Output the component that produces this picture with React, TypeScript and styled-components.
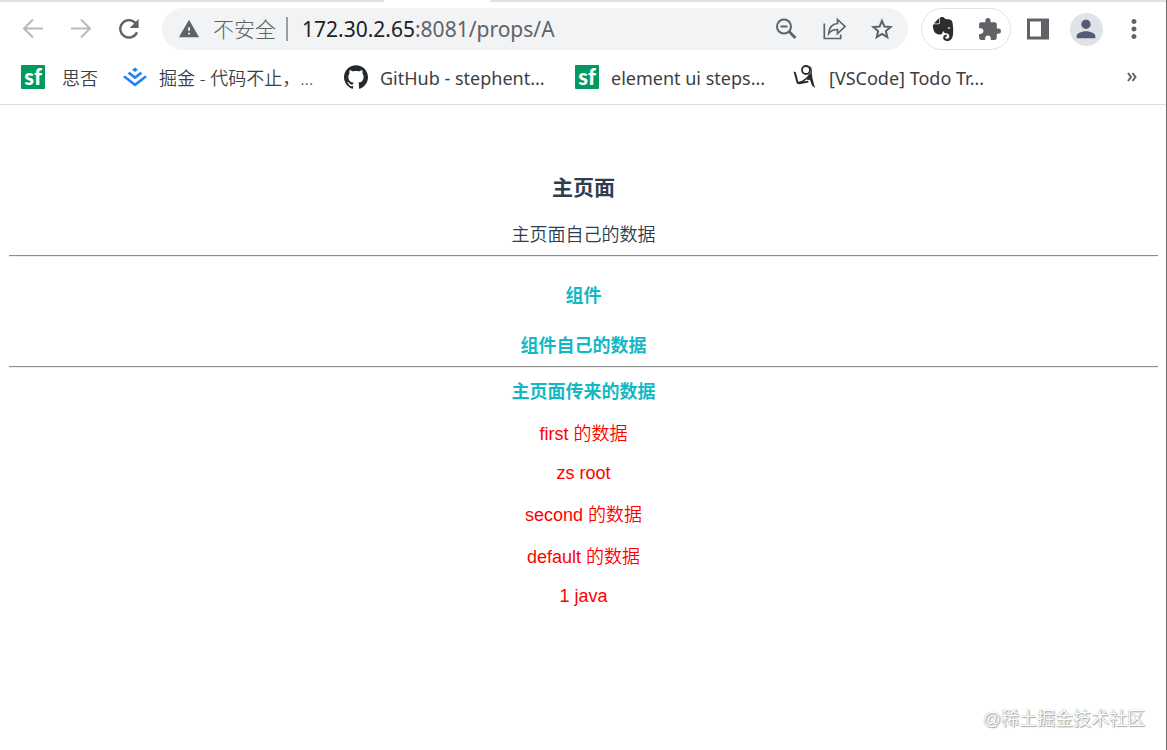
import React from 'react';
import styled, { createGlobalStyle } from 'styled-components';
import { MdExtension, MdMoreVert, MdPerson, MdWarning } from 'react-icons/md';
import { SiEvernote, SiJuejin, SiGithub } from 'react-icons/si';

const Global = createGlobalStyle`
  *, *::before, *::after { box-sizing: border-box; }
  body { margin: 0; background: #fff; }
`;

const uiFont = `'Noto Sans', 'Noto Sans CJK SC', sans-serif`;
const pageFont = `'Liberation Sans', 'Noto Sans CJK SC', sans-serif`;

const Window = styled.div`
  min-height: 100vh;
  display: flex;
  flex-direction: column;
  border-right: 1px solid #6b6b6b;
`;

const Chrome = styled.header`
  font-family: ${uiFont};
  border-bottom: 1px solid #dadce0;
`;

const TabEdge = styled.div`
  display: flex;
  height: 2px;
  justify-content: space-between;
`;

const TabEdgePart = styled.div<{ $grow: number }>`
  flex: ${p => p.$grow} 1 0;
  background: #dee1e3;
  &:first-child { margin-right: 106px; }
`;

const Toolbar = styled.nav`
  display: flex;
  align-items: center;
  padding: 6px 8px 0 9px;
`;

const IconButton = styled.button<{ $width?: number; $faded?: boolean }>`
  display: flex;
  flex: none;
  align-items: center;
  justify-content: center;
  width: ${p => p.$width ?? 48}px;
  height: 42px;
  padding: 0;
  border: 0;
  background: none;
  color: ${p => (p.$faded ? '#b8b9bb' : '#5f6368')};
`;

const AddressBar = styled.div`
  display: flex;
  flex: 1;
  align-items: center;
  min-width: 0;
  height: 42px;
  margin: 0 13px 0 9px;
  padding: 0 2px 0 16px;
  border-radius: 21px;
  background: #f1f3f4;
  color: #5f6368;
`;

const Security = styled.span`
  flex: none;
  margin: 0 10px 0 13px;
  font-size: 21px;
  line-height: 28px;
  font-weight: 300;
`;

const Divider = styled.span`
  flex: none;
  width: 2px;
  height: 24px;
  margin-right: 14px;
  background: #9b9ea2;
`;

const Url = styled.span`
  flex: 1;
  font-size: 21px;
  line-height: 28px;
  white-space: nowrap;
`;

const Host = styled.span`
  color: #202124;
`;

const Extensions = styled.div`
  display: flex;
  flex: none;
  gap: 4px;
  height: 42px;
  align-items: center;
  margin-right: 3px;
  border: 1px solid #dfe1e4;
  border-radius: 21px;
`;

const Avatar = styled.span`
  display: flex;
  align-items: center;
  justify-content: center;
  width: 33px;
  height: 33px;
  border-radius: 50%;
  background: #dfe3e8;
  color: #545b77;
`;

const Bookmarks = styled.nav`
  display: flex;
  align-items: center;
  height: 54px;
  padding: 0 10px 0 21px;
`;

const Bookmark = styled.a<{ $width: number; $gap?: number; $light?: boolean }>`
  display: flex;
  flex: none;
  align-items: center;
  gap: ${p => p.$gap ?? 12}px;
  width: ${p => p.$width}px;
  color: #3c4043;
  font-size: 18px;
  font-weight: ${p => (p.$light ? 350 : 400)};
  line-height: 24px;
  text-decoration: none;
  white-space: nowrap;
`;

const BookmarkName = styled.span`
  padding-top: 2px;
`;

const SfLogo = styled.span`
  display: block;
  flex: none;
  width: 24px;
  height: 24px;
  border-radius: 1px;
  background: #009a61;
  color: #fff;
  font: 900 22px/24px Lato, sans-serif;
  text-align: center;
`;

const More = styled(IconButton)`
  margin-left: auto;
`;

const Main = styled.main`
  padding: 69px 8px 24px 9px;
  color: #2c3e50;
  font-family: ${pageFont};
  font-size: 18px;
  line-height: 24px;
  text-align: center;
`;

const Title = styled.h3`
  margin: 0 0 21px;
  font-size: 21px;
  line-height: 28px;
`;

const Own = styled.div`
  font-weight: 350;
`;

const Rule = styled.hr`
  height: 2px;
  margin: 8px 0 12px;
  border: 0;
  border-top: 1px solid #8e8e8e;
  border-bottom: 1px solid #eee;
`;

const Child = styled.section`
  padding-top: 15px;
`;

const ChildTitle = styled.h4`
  margin: 0 0 26px;
  color: #14b8c4;
  font-size: 18px;
`;

const ChildText = styled.div`
  color: #14b8c4;
  font-weight: 700;
`;

const Slot = styled.p<{ $latin?: boolean }>`
  margin: 18px 0 ${p => (p.$latin ? 21 : 18)}px;
  color: #f00;
  font-weight: 350;
  line-height: ${p => (p.$latin ? 18 : 24)}px;
`;

const Watermark = styled.footer`
  margin-top: auto;
  padding: 0 21px 19px;
  color: #fff;
  font-family: ${pageFont};
  font-size: 18px;
  line-height: 24px;
  text-align: right;
  text-shadow: 0 0 1px #888, 1px 1px 1px #aaa;
`;

const Arrow = ({ flip }: { flip?: boolean }) => (
  <svg width="22" height="22" viewBox="0 0 22 22" fill="none" stroke="currentColor" strokeWidth="2">
    <path d={flip ? 'M1 10.500H20M11 1.500l9 9-9 9' : 'M21 10.500H2M11 1.500l-9 9 9 9'} />
  </svg>
);

const ReloadIcon = () => (
  <svg width="24" height="24" viewBox="0 0 24 24" fill="none">
    <path d="M20 15.2A8.7 8.7 0 1 1 18.6 6.2" stroke="currentColor" strokeWidth="2.4" />
    <path d="M21.6 2v9h-9z" fill="currentColor" />
  </svg>
);

const ZoomOutIcon = () => (
  <svg width="22" height="22" viewBox="0 0 22 22" fill="none" stroke="currentColor" strokeWidth="2">
    <circle cx="9" cy="8.500" r="7" />
    <path d="M5.500 8.500h7" />
    <path d="M14 13.500l6.500 6.500" strokeWidth="2.8" />
  </svg>
);

const ShareIcon = () => (
  <svg width="24" height="24" viewBox="0 0 24 24" fill="none" stroke="currentColor" strokeWidth="1.7">
    <path d="M2.300 6.500v15h16.400v-4" />
    <path d="M15.500 2.500l7.500 7-7.500 7v-4c-4 0-6.800 1.200-8.800 4 .4-5.500 3.400-9.500 8.800-10z" />
  </svg>
);

const StarIcon = () => (
  <svg width="24" height="24" viewBox="0 0 24 24" fill="none" stroke="currentColor" strokeWidth="2">
    <path d="M12 3.800l2.400 5.700 6.200.5-4.700 4.100 1.400 6.100-5.300-3.200-5.300 3.200 1.400-6.100L3.400 10l6.200-.5z" />
  </svg>
);

const PanelIcon = () => (
  <svg width="22" height="22" viewBox="0 0 22 22">
    <path d="M0 0.500h22v21H0zM3 3.500v15h11v-15z" fill="currentColor" fillRule="evenodd" />
  </svg>
);

const FigureIcon = () => (
  <svg width="24" height="24" viewBox="0 0 24 24" fill="none" stroke="#2b2b2b">
    <circle cx="13" cy="5" r="4" strokeWidth="1.800" />
    <path d="M0.500 6.500l2.300 0.800 2.600 9.700 10-1.200v1.800l-9 1.600-2.600-.6z" fill="#2b2b2b" stroke="none" />
    <path d="M5 17.800c5-1 9.500-4.500 12-9" strokeWidth="1.500" />
    <path d="M16.600 1.500c1.800 2 2 4.500 1.300 7" strokeWidth="1.200" />
    <path d="M18.600 6.500l.9 7 2.500 9.500-3-2.500-2-5.500-3.500-.3z" fill="#2b2b2b" stroke="none" />
  </svg>
);

const ChevronsIcon = () => (
  <svg width="10" height="10" viewBox="0 0 10 10" fill="none" stroke="currentColor" strokeWidth="2">
    <path d="M1 1l3 4-3 4M5.500 1l3 4-3 4" />
  </svg>
);

export default function App() {
  return (
    <Window>
      <Global />
      <Chrome>
        <TabEdge>
          <TabEdgePart $grow={384} />
          <TabEdgePart $grow={677} />
        </TabEdge>
        <Toolbar>
          <IconButton $faded aria-label="Back"><Arrow /></IconButton>
          <IconButton $faded aria-label="Forward"><Arrow flip /></IconButton>
          <IconButton aria-label="Reload"><ReloadIcon /></IconButton>
          <AddressBar>
            <MdWarning size={22} />
            <Security>不安全</Security>
            <Divider />
            <Url><Host>172.30.2.65</Host>:8081/props/A</Url>
            <IconButton aria-label="Zoom"><ZoomOutIcon /></IconButton>
            <IconButton aria-label="Share"><ShareIcon /></IconButton>
            <IconButton aria-label="Bookmark this page"><StarIcon /></IconButton>
          </AddressBar>
          <Extensions>
            <IconButton $width={42} aria-label="Evernote"><SiEvernote size={24} color="#2d2d2d" /></IconButton>
            <IconButton $width={42} aria-label="Extensions"><MdExtension size={25} /></IconButton>
          </Extensions>
          <IconButton aria-label="Side panel"><PanelIcon /></IconButton>
          <IconButton aria-label="Profile"><Avatar><MdPerson size={28} /></Avatar></IconButton>
          <IconButton aria-label="Menu"><MdMoreVert size={30} /></IconButton>
        </Toolbar>
        <Bookmarks>
          <Bookmark href="#sf" $width={102} $gap={17} $light>
            <SfLogo>sf</SfLogo><BookmarkName>思否</BookmarkName>
          </Bookmark>
          <Bookmark href="#juejin" $width={221} $light>
            <SiJuejin size={24} color="#1e80ff" /><BookmarkName>掘金 - 代码不止，...</BookmarkName>
          </Bookmark>
          <Bookmark href="#github" $width={231}>
            <SiGithub size={24} color="#24292e" /><BookmarkName>GitHub - stephent...</BookmarkName>
          </Bookmark>
          <Bookmark href="#steps" $width={218}>
            <SfLogo>sf</SfLogo><BookmarkName>element ui steps...</BookmarkName>
          </Bookmark>
          <Bookmark href="#todo" $width={200}>
            <FigureIcon /><BookmarkName>[VSCode] Todo Tr...</BookmarkName>
          </Bookmark>
          <More aria-label="More bookmarks"><ChevronsIcon /></More>
        </Bookmarks>
      </Chrome>
      <Main>
        <Title>主页面</Title>
        <Own>主页面自己的数据</Own>
        <Rule />
        <Child>
          <ChildTitle>组件</ChildTitle>
          <ChildText>组件自己的数据</ChildText>
          <Rule />
          <ChildText>主页面传来的数据</ChildText>
          <Slot>first 的数据</Slot>
          <Slot $latin>zs root</Slot>
          <Slot>second 的数据</Slot>
          <Slot>default 的数据</Slot>
          <Slot $latin>1 java</Slot>
        </Child>
      </Main>
      <Watermark>@稀土掘金技术社区</Watermark>
    </Window>
  );
}
